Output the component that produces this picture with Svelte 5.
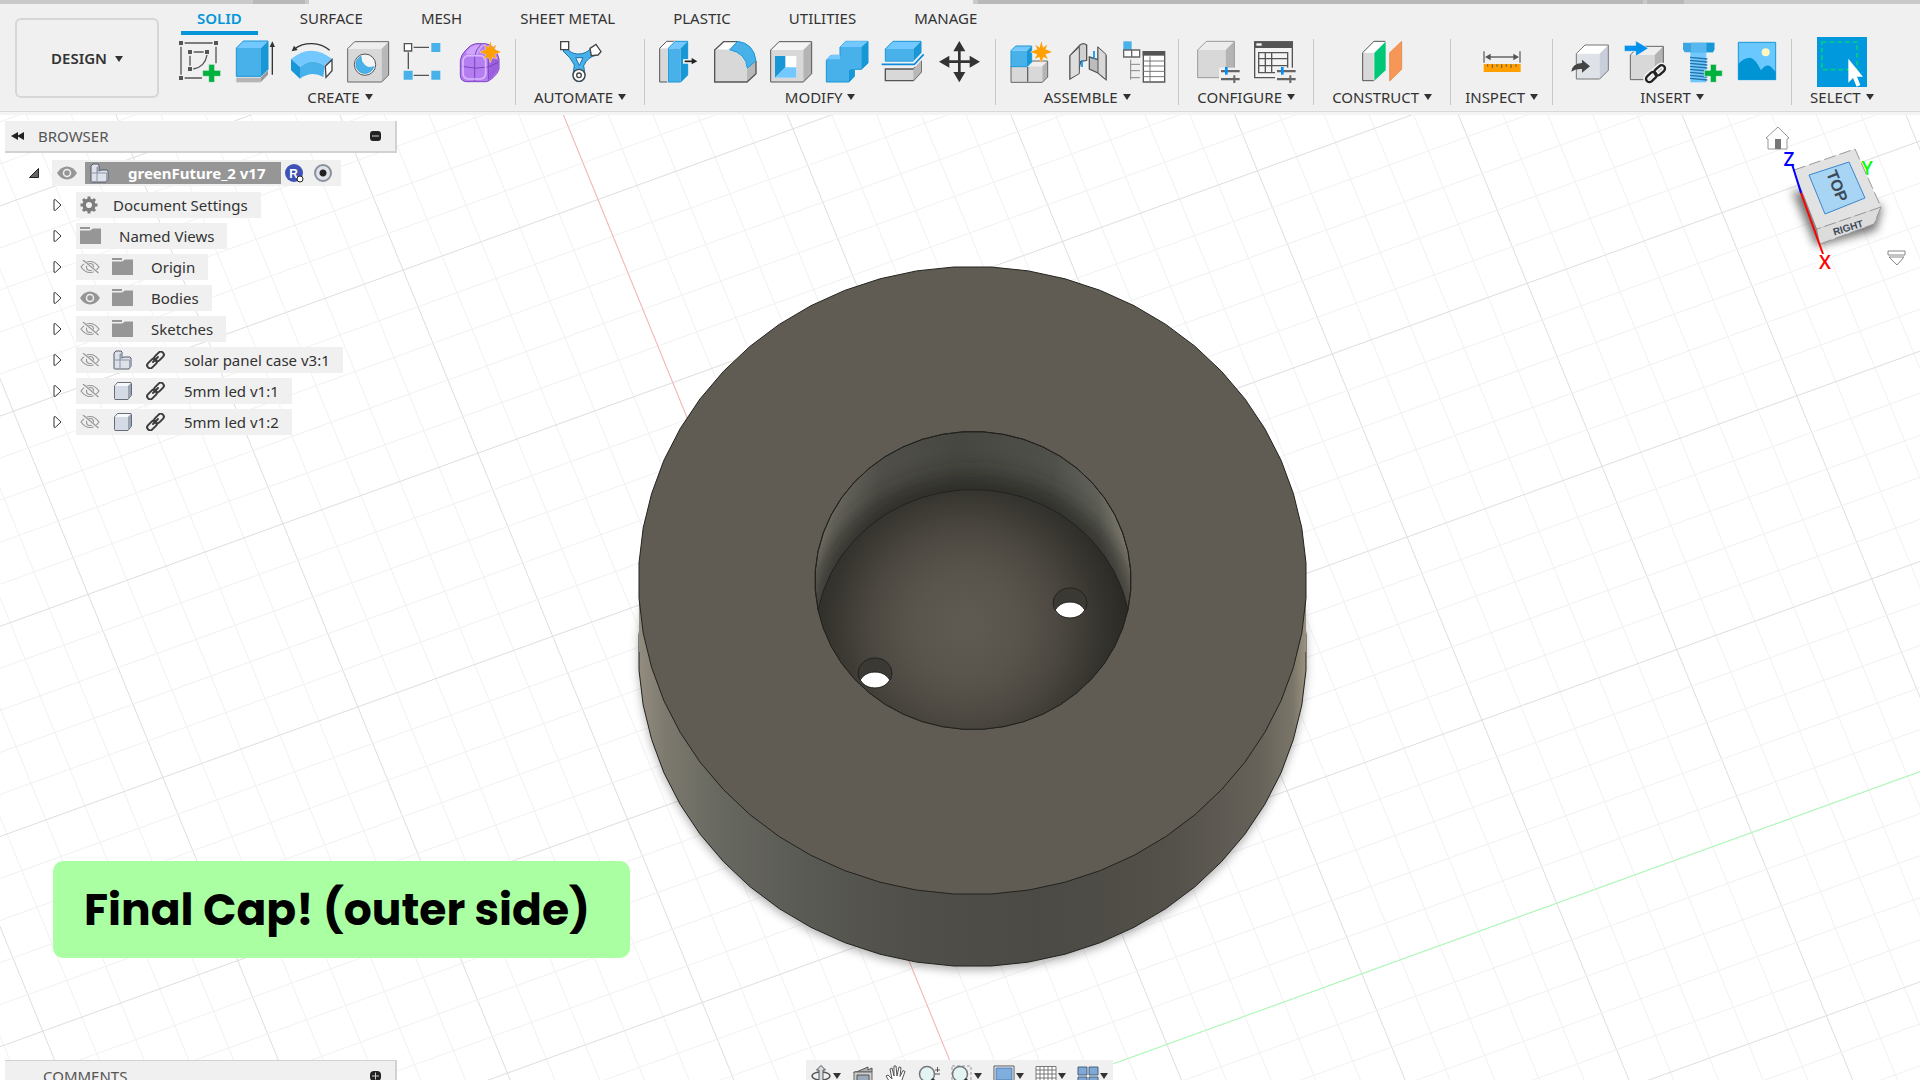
<script>
  // CAD workspace: ribbon toolbar, browser tree and the modelling canvas.
  // Toolbar icons are drawn in a 126-unit box and shown at 42px.

  const tabs = ['SOLID', 'SURFACE', 'MESH', 'SHEET METAL', 'PLASTIC', 'UTILITIES', 'MANAGE'];
  let activeTab = $state('SOLID');

  const groups = [
    { label: 'CREATE', icons: ['sketch', 'extrude', 'revolve', 'hole', 'pattern', 'form'] },
    { label: 'AUTOMATE', icons: ['automate'], narrow: true },
    { label: 'MODIFY', icons: ['presspull', 'fillet', 'shell', 'combine', 'split', 'move'] },
    { label: 'ASSEMBLE', icons: ['component', 'joint', 'bom'] },
    { label: 'CONFIGURE', icons: ['configure', 'configtable'], narrow: true },
    { label: 'CONSTRUCT', icons: ['plane'], narrow: true },
    { label: 'INSPECT', icons: ['measure'] },
    { label: 'INSERT', icons: ['derive', 'insertlink', 'fastener', 'decal'] },
    { label: 'SELECT', icons: ['select'], narrow: true },
  ];

  const tree = [
    { label: 'Document Settings', icon: 'gear' },
    { label: 'Named Views', icon: 'folder' },
    { label: 'Origin', eye: 'off', icon: 'folder' },
    { label: 'Bodies', eye: 'on', icon: 'folder' },
    { label: 'Sketches', eye: 'off', icon: 'folder' },
    { label: 'solar panel case v3:1', eye: 'off', icon: 'assembly', link: true },
    { label: '5mm led v1:1', eye: 'off', icon: 'body', link: true },
    { label: '5mm led v1:2', eye: 'off', icon: 'body', link: true },
  ];

  const nav = [
    { name: 'orbit', menu: true },
    { name: 'lookat' },
    { name: 'pan' },
    { name: 'zoom' },
    { name: 'fit', menu: true },
    { name: 'display', menu: true },
    { name: 'grid', menu: true },
    { name: 'viewports', menu: true },
  ];

  // Ground grid: an origin and the two axis steps of one major cell.
  const origin = { x: 972, y: 1115 };
  const u = { x: 74.8, y: 183.1 };
  const v = { x: 194.9, y: -70.6 };

  function gridLine(i, step, dir) {
    const k = i / 5;
    const cx = origin.x + step.x * k;
    const cy = origin.y + step.y * k;
    return {
      x1: cx - dir.x * 14,
      y1: cy - dir.y * 14,
      x2: cx + dir.x * 14,
      y2: cy + dir.y * 14,
      major: i % 5 === 0,
    };
  }

  const range = Array.from({ length: 121 }, (_, i) => i - 60);
  const xLines = range.map((i) => gridLine(i, v, u));
  const yLines = range.map((i) => gridLine(i, u, v));

  // Faceted ellipse, the way the renderer tessellates round edges.
  function ring(cx, cy, rx, ry, n = 56) {
    return Array.from({ length: n }, (_, i) => {
      const a = ((i + 0.5) / n) * Math.PI * 2 - Math.PI / 2;
      return `${(cx + rx * Math.cos(a)).toFixed(1)},${(cy + ry * Math.sin(a)).toFixed(1)}`;
    }).join(' ');
  }

  const topFace = ring(972.5, 580.5, 334, 314);
  const baseFace = ring(972.5, 652.5, 334, 314);
  const bore = ring(973, 580.5, 158, 149, 48);
  const floor = ring(973, 638.5, 158, 149, 48);
  const holes = [
    { x: 1070, y: 603 },
    { x: 875, y: 673 },
  ];
</script>

{#snippet box(x, y, w, h, d, front, top, side, line)}
  <g stroke={line} stroke-width="3" stroke-linejoin="round">
    <path d="M{x} {y + d}h{w - d}v{h - d}h{d - w}z" fill={front} stroke="none" />
    <path d="M{x} {y + d}l{d} {-d}h{w - d}l{-d} {d}z" fill={top} stroke="none" />
    <path d="M{x + w - d} {y + d}l{d} {-d}v{h - d}l{-d} {d}z" fill={side} stroke="none" />
    <path d="M{x} {y + d}l{d} {-d}h{w - d}v{h - d}l{-d} {d}h{d - w}z" fill="none" />
  </g>
{/snippet}

{#snippet plus(x, y)}
  <path
    d="M{x - 9} {y - 27}h18v18h18v18h-18v18h-18v-18h-18v-18h18z"
    fill="#00b140"
    stroke="#f0f0f0"
    stroke-width="2"
  />
{/snippet}

{#snippet star(x, y)}
  <path
    transform="translate({x} {y})"
    d="M0-32L5-13 18-22 12-8 32 0 12 7 20 21 6 14 0 32-6 14-20 21-12 7-32 0-12-8-18-22-5-13z"
    fill="#ff9f00"
    stroke="#f0f0f0"
    stroke-width="2"
    paint-order="stroke"
  />
{/snippet}

{#snippet sliders(x, y)}
  <g fill="#666">
    <path d="M{x - 6} {y - 2}h66v43h-66z" fill="#f0f0f0" />
    <path d="M{x} {y + 5}h56v7h-56zM{x} {y + 29}h56v7h-56zM{x + 37} {y + 21}h6v23h-6z" />
    <path d="M{x + 12} {y - 4}h8v23h-8z" fill="#0091ff" />
  </g>
{/snippet}

{#snippet chain()}
  <g fill="none" stroke="#3c3c3c" stroke-width="2" stroke-linecap="round">
    <rect x="7.5" y="2.5" width="11" height="6" rx="3" transform="rotate(-45 13 5.5)" />
    <rect x="0.5" y="9.5" width="11" height="6" rx="3" transform="rotate(-45 6 12.5)" />
    <path d="M7 11l5-5" />
  </g>
{/snippet}

{#snippet toolIcon(name)}
  <svg class="tool-icon" viewBox="0 0 126 126" aria-hidden="true">
    {#if name === 'sketch'}
      <g fill="#555">
        <path d="M0 0h12v12H0zM105 0h12v12h-12zM0 105h12v12H0zM27 27h12v12H27zM78 27h12v12H78zM27 78h12v12H27z" />
      </g>
      <path d="M17 6h84M6 17v84M111 17v50M17 111h52M44 33h30M33 44v30M84 42C80 65 66 80 43 84" fill="none" stroke="#555" stroke-width="4" />
      {@render plus(98, 97)}
    {:else if name === 'extrude'}
      <path d="M4 110h73v14H4z" fill="#b5b5b5" />
      <path d="M77 110l22-22v13l-22 23z" fill="#999" />
      {@render box(4, 0, 95, 106, 21, '#49b1ea', '#73c9ff', '#1897d6', '#1897d6')}
      <path d="M112 101V14" stroke="#333" stroke-width="4" />
      <path d="M112 1l8 17h-16z" fill="#333" />
    {:else if name === 'revolve'}
      <path d="M116 28C86 2 40 2 10 24" fill="none" stroke="#333" stroke-width="4" />
      <path d="M2 31l7-17 11 13z" fill="#333" />
      <path d="M0 54Q60 4 124 54L101 74Q62 48 27 78z" fill="#73c9ff" />
      <path d="M0 54L27 78v35L0 88z" fill="#1897d6" />
      <path d="M27 78Q62 48 101 74L97 108Q62 88 27 113z" fill="#49b1ea" />
      <path d="M103 76l20-20v33l-18 20z" fill="#fff" stroke="#444" stroke-width="4" />
    {:else if name === 'hole'}
      {@render box(2, 2, 123, 121, 21, '#d8d8d8', '#eee', '#b8b8b8', '#666')}
      <circle cx="54" cy="71" r="32" fill="#f4f4f4" stroke="#555" stroke-width="3" />
      <path d="M42 46A27 27 0 1 0 80 77Q66 84 54 74 40 62 42 46z" fill="#49b1ea" stroke="#1897d6" stroke-width="2" />
    {:else if name === 'pattern'}
      <path d="M32 19h46M16 34v50M32 103h46" stroke="#555" stroke-width="4" />
      <path d="M4 8h22v22H4z" fill="#fff" stroke="#555" stroke-width="4" />
      <path d="M85 6h27v27H85zM2 89h27v27H2zM85 89h27v27H85z" fill="#49b1ea" />
    {:else if name === 'form'}
      <path d="M4 58Q6 42 20 28 34 10 50 8h30q30 4 40 46v30q-4 14-18 26t-20 12H24Q4 122 4 102z" fill="#b57ef0" stroke="#8143c4" stroke-width="3" />
      <path d="M20 36Q36 12 52 11h24Q62 24 56 40H24z" fill="#cfa4ff" />
      <path d="M92 56l26-4v30q-6 16-28 34z" fill="#9a5fdd" />
      <path d="M8 76q40 10 80 2l30-14M47 120V46Q50 26 66 10M88 116V46" fill="none" stroke="#7c42c0" stroke-width="3" />
      <rect x="12" y="44" width="68" height="70" rx="16" fill="none" stroke="#dab8ff" stroke-width="5" />
      {@render star(94, 33)}
    {:else if name === 'automate'}
      <path d="M22 20Q34 38 56 39 80 40 96 22l16 20Q86 48 74 74l4 28q0 20-18 20t-18-20l4-30Q36 50 12 30z" fill="#49b1ea" stroke="#1573b2" stroke-width="3" />
      <path d="M50 50h22l-11 24z" fill="#f0f0f0" stroke="#1573b2" stroke-width="3" />
      <path d="M5 2h24v24H5z" fill="#fff" stroke="#444" stroke-width="4" />
      <path d="M93 22l18-12 15 22-9 10-20 2z" fill="#fff" stroke="#444" stroke-width="4" />
      <circle cx="60" cy="103" r="18" fill="#fff" stroke="#444" stroke-width="4" />
      <circle cx="60" cy="103" r="7" fill="none" stroke="#444" stroke-width="4" />
    {:else if name === 'presspull'}
      {@render box(2, 1, 50, 122, 21, '#d8d8d8', '#fff', '#b8b8b8', '#555')}
      <path d="M24 24L46 0h6v125H24z" fill="#f0f0f0" />
      {@render box(28, 1, 58, 122, 21, '#49b1ea', '#73c9ff', '#1897d6', '#1897d6')}
      <path d="M72 54h28V43l18 18-18 18V68H72z" fill="#f0f0f0" />
      <path d="M77 61h22" stroke="#222" stroke-width="5" />
      <path d="M98 51l17 10-17 9z" fill="#222" />
    {:else if name === 'fillet'}
      <path d="M0 25L26 2h40L42 26q44 8 54 60l27-28v41L96 123H0z" fill="#d8d8d8" />
      <path d="M0 25L26 2h40L42 26z" fill="#fff" />
      <path d="M96 86l27-28v41L96 123z" fill="#b8b8b8" />
      <path d="M66 2H26L-1 27v96h97l27-25V60" fill="none" stroke="#555" stroke-width="4" />
      <path d="M44 26L68 1q48 6 55 58L97 82Q92 36 44 26z" fill="#49b1ea" stroke="#1897d6" stroke-width="3" />
    {:else if name === 'shell'}
      {@render box(-1, 2, 123, 121, 25, '#d8d8d8', '#f4f4f4', '#b4b4b4', '#555')}
      <path d="M12 45h64v65H12z" fill="#fff" />
      <path d="M12 45h31v34l-31 31z" fill="#1897d6" />
      <path d="M12 110l31-31h33v31z" fill="#73c9ff" />
    {:else if name === 'combine'}
      <path d="M-2 58l14-15h27V18L56 1h67v65l-20 19H82v21l-16 17H-2z" fill="#49b1ea" stroke="#1897d6" stroke-width="3" />
      <path d="M-2 55l14-13h27v13zM39 18L56 1h67l-19 17z" fill="#73c9ff" />
      <path d="M104 18l19-17v65l-19 19zM66 123l16-17V85H70l-4 5z" fill="#1897d6" />
    {:else if name === 'split'}
      {@render box(7, 1, 107, 60, 23, '#49b1ea', '#73c9ff', '#1897d6', '#1897d6')}
      <path d="M7 84h84l24-24v32L91 119H7z" fill="#d8d8d8" stroke="#555" stroke-width="4" />
      <path d="M91 84l24-24v32L91 119z" fill="#b8b8b8" />
      <path d="M-4 70h98l28-30" fill="none" stroke="#f0f0f0" stroke-width="16" />
      <path d="M-4 70h98l28-30" fill="none" stroke="#0c8ce0" stroke-width="5" />
    {:else if name === 'move'}
      <path d="M61 0l18 31H65v27h27V44l31 18-31 18V66H65v27h14l-18 31-18-31h14V66H31v14L0 62l31-18v14h26V31H43z" fill="#333" />
    {:else if name === 'component'}
      {@render box(3, 60, 110, 64, 16, '#d8d8d8', '#eee', '#b4b4b4', '#666')}
      {@render box(3, 15, 62, 62, 14, '#49b1ea', '#73c9ff', '#1897d6', '#1897d6')}
      <path d="M53 78v44" stroke="#666" stroke-width="4" />
      {@render star(94, 33)}
    {:else if name === 'joint'}
      <path d="M12 44l30-32q10-8 20 0v46l-18 4-8 34-24 18z" fill="#d0d0d0" stroke="#555" stroke-width="4" />
      <path d="M12 44l28-26v80l-28 16z" fill="#dedede" stroke="#555" stroke-width="3" />
      <path d="M120 44L96 20v36l-26-8v36l26 12 24 20z" fill="#bcbcbc" stroke="#555" stroke-width="4" />
      <path d="M96 18l24 22v76L96 96z" fill="#d8d8d8" stroke="#555" stroke-width="3" />
      <path d="M48 58v20M84 30v24" stroke="#0091ff" stroke-width="5" />
    {:else if name === 'bom'}
      <path d="M4 1h25v26H4z" fill="#49b1ea" />
      <path d="M5 27h24v21H5zM29 27h24v21H29z" fill="#fff" stroke="#666" stroke-width="4" />
      <path d="M26 56v60M26 70h28M26 89h28M26 110h28" stroke="#888" stroke-width="3" />
      <path d="M64 32h64v91H64z" fill="#fff" stroke="#555" stroke-width="4" />
      <path d="M62 30h66v14H62z" fill="#555" />
      <path d="M64 60h64M64 75h64M64 91h64M64 107h64M84 46v76" stroke="#777" stroke-width="3" />
    {:else if name === 'configure'}
      {@render box(2, 1, 110, 109, 26, '#d8d8d8', '#ececec', '#b4b4b4', '#999')}
      {@render sliders(72, 82)}
    {:else if name === 'configtable'}
      <path d="M5 3h113v107H5z" fill="#f4f4f4" stroke="#555" stroke-width="4" />
      <path d="M3 1h117v20H3z" fill="#555" />
      <path d="M10 7h16v7H10z" fill="#fff" />
      <path d="M17 35h87v60H17zM17 53h87M17 74h87M37 35v60M56 35v60" fill="none" stroke="#555" stroke-width="4" />
      {@render sliders(72, 82)}
    {:else if name === 'plane'}
      {@render box(5, 1, 68, 118, 34, '#d8d8d8', '#fff', '#d8d8d8', '#555')}
      <path d="M39 36L75 0v88l-36 33z" fill="#00c878" stroke="#f0f0f0" stroke-width="2" />
      <path d="M86 35l36-34v84L86 120z" fill="#f79757" stroke="#e07a35" stroke-width="2" />
    {:else if name === 'measure'}
      <path d="M8 69h111v24H8z" fill="#ff9f00" />
      <path d="M20 70v7M34 70v11M48 70v7M62 70v11M76 70v7M90 70v11M105 70v7" stroke="#555" stroke-width="3" />
      <path d="M9 31v34M117 31v34M20 48h86" stroke="#666" stroke-width="4" />
      <path d="M12 48l17-10v20zM114 48L97 38v20z" fill="#555" />
    {:else if name === 'derive'}
      {@render box(28, 12, 96, 102, 26, '#dfe2e8', '#fff', '#c9cedb', '#777')}
      <path d="M13 92q2-24 32-26V56l24 20-24 19V84q-20-2-32 8z" fill="#444" />
    {:else if name === 'insertlink'}
      {@render box(22, 16, 99, 100, 26, '#d8d8d8', '#eee', '#b4b4b4', '#666')}
      <path d="M4 13h34V-1l38 23-38 24V31H4z" fill="#0091ee" stroke="#f0f0f0" stroke-width="2" />
      <g fill="none" stroke="#f0f0f0" stroke-width="17">
        <rect x="92" y="78" width="36" height="20" rx="10" transform="rotate(-42 110 88)" />
        <rect x="67" y="98" width="36" height="20" rx="10" transform="rotate(-42 85 108)" />
      </g>
      <g fill="none" stroke="#222" stroke-width="7">
        <rect x="92" y="78" width="36" height="20" rx="10" transform="rotate(-42 110 88)" />
        <rect x="67" y="98" width="36" height="20" rx="10" transform="rotate(-42 85 108)" />
      </g>
    {:else if name === 'fastener'}
      <path d="M34 30h48v94H34z" fill="#73c9ff" />
      <path d="M12 5h94v20l-4 9H17l-5-9z" fill="#3ba6df" />
      <path d="M36 5h47v29H36z" fill="#58b7ee" />
      <path d="M83 5h23v20l-4 9H83z" fill="#1897d6" />
      <path d="M33 49l52 5M33 58l52 5M33 67l52 5M33 76l52 5M33 85l52 5M33 94l52 5M33 103l52 5M33 112l52 5" stroke="#2273a8" stroke-width="4" />
      {@render plus(103, 97)}
    {:else if name === 'decal'}
      <path d="M10 4h112v112H10z" fill="#6bc8ff" stroke="#1897d6" stroke-width="3" />
      <path d="M10 70Q24 50 46 50q16 4 32 38 14-20 28-12l16 16v24H10z" fill="#0094d4" />
      <circle cx="92" cy="34" r="12" fill="#fff8c0" />
    {:else if name === 'select'}
      <path d="M-12-12h150v150H-12z" fill="#0099dd" />
      <path d="M3 3h105v83H3z" fill="none" stroke="#00d084" stroke-width="5" stroke-dasharray="14 9" />
      <path d="M82 55v72l14-14 11 26 11-5-10-25h18z" fill="#fff" transform="translate(0 -2)" />
    {/if}
  </svg>
{/snippet}

{#snippet eye(kind)}
  <svg class="eye" viewBox="0 0 20 14" aria-hidden="true">
    {#if kind === 'on'}
      <path d="M0 7Q4 0.5 10 0.5T20 7Q16 13.5 10 13.5T0 7z" fill="#969696" />
      <circle cx="10" cy="7" r="3.5" fill="none" stroke="#f0f0f0" stroke-width="1.5" />
    {:else}
      <g fill="none" stroke="#969696" stroke-width="1.2">
        <path d="M1 7Q5 1.5 10 1.5T19 7Q15 12.5 10 12.5T1 7z" />
        <circle cx="10" cy="7" r="3.5" />
        <path d="M2 0l17 14" stroke="#f0f0f0" stroke-width="3" />
        <path d="M3 0l15.5 13" />
      </g>
    {/if}
  </svg>
{/snippet}

{#snippet treeIcon(name)}
  {#if name === 'gear'}
    <svg class="gear" viewBox="-9 -9 18 18" aria-hidden="true">
      <circle r="4.8" fill="none" stroke="#7d7d7d" stroke-width="3.5" />
      {#each [0, 45, 90, 135] as a}
        <path d="M-1.5-8.5h3v3h-3zM-1.5 5.5h3v3h-3z" fill="#7d7d7d" transform="rotate({a})" />
      {/each}
    </svg>
  {:else if name === 'folder'}
    <svg class="node" viewBox="0 0 22 20" aria-hidden="true">
      <path d="M0 1h10v2H0zM0 4.5h10l3-2h8V18H0z" fill="#969696" />
    </svg>
  {:else if name === 'assembly'}
    <svg class="node" viewBox="0 0 22 20" aria-hidden="true">
      <path d="M2 3l2-2h5l1 1v6l2-1h6l1 1v8l-2 3H2.500L2 18.5z" fill="#dde2ea" stroke="#555b66" />
      <path d="M8 4l2-2v6l-2 2zM17 10l2-2v8l-2 3z" fill="#9aa3b2" />
      <path d="M2 10h6v8M8 10h9M8 4v6" fill="none" stroke="#8d95a3" />
    </svg>
  {:else}
    <svg class="node" viewBox="0 0 22 20" aria-hidden="true">
      <path d="M2.500 5l3-3.500H19l.5 1V14L16 18.500H3l-.5-1z" fill="#d5dbe5" stroke="#666c78" />
      <path d="M3 5l3-3h13l-3 3z" fill="#f6f8fb" />
      <path d="M16 5l3-3v12l-3 4z" fill="#9aa3b2" />
    </svg>
  {/if}
{/snippet}

{#snippet navIcon(name)}
  <svg class="nav-icon" viewBox="0 0 22 22" aria-hidden="true">
    {#if name === 'orbit'}
      <ellipse cx="11" cy="11" rx="9" ry="4" fill="none" stroke="#555" stroke-width="1.5" />
      <path d="M9 20V5H6.500L11 .5 15.500 5H13v15z" fill="#d5dde3" stroke="#555" />
    {:else if name === 'lookat'}
      <path d="M2 8l14-6v3l4-2v4H2z" fill="#b0b0b0" stroke="#555" />
      <path d="M2 7h18v13H2z" fill="#ccc" stroke="#666" />
      <path d="M5 10h12v8H5z" fill="#9aaabb" stroke="#555" />
    {:else if name === 'pan'}
      <path d="M6 19L1 11l2-1 4 4L5 4l2-1 2 8V1h2l1 10 2-9 2 .5-1 9 3-6 2 1-4 11-2 5z" fill="#fff" stroke="#555" />
    {:else if name === 'zoom'}
      <circle cx="9" cy="9" r="7.5" fill="#e3f4f4" stroke="#777" stroke-width="1.5" />
      <path d="M14 14l6 6" stroke="#333" stroke-width="3" />
      <path d="M17 5h5M19.500 2v5M17 9h5" stroke="#555" />
    {:else if name === 'fit'}
      <path d="M1 1h19v18H1z" fill="none" stroke="#999" stroke-dasharray="3 2" />
      <circle cx="9" cy="9" r="7.5" fill="#e3f4f4" stroke="#777" stroke-width="1.5" />
      <path d="M14 14l6 6" stroke="#333" stroke-width="3" />
    {:else if name === 'display'}
      <path d="M1 1h20v16H1z" fill="#fff" stroke="#555" />
      <path d="M3 3h16v12H3z" fill="#7fadde" stroke="#4a7db5" />
    {:else if name === 'grid'}
      <path d="M1 1.500h20v18H1zM1 5h20M1 9h20M1 13h20M5 1v18M9 1v18M13 1v18M17 1v18" fill="#fff" stroke="#777" />
    {:else}
      <path d="M1 2h9v8H1zM12 2h9v8h-9zM1 12h9v8H1zM12 12h9v8h-9z" fill="#7fa8d4" stroke="#44617f" />
    {/if}
  </svg>
{/snippet}

<div class="app">
  <div class="window-tabs">
    <span style="width: 13.2%"></span>
    <span class="dark" style="width: 2.7%"></span>
    <span style="width: 0.2%"></span>
    <span class="open" style="width: 34.6%"></span>
    <span style="width: 0.25%"></span>
    <span class="dark" style="width: 34.6%"></span>
    <span style="width: 0.25%"></span>
    <span class="dark" style="width: 1.9%"></span>
    <span class="rest"></span>
  </div>

  <header>
    <button class="workspace-switch" type="button">DESIGN <i class="caret"></i></button>
    <div class="ribbon">
      <nav class="tabs">
        {#each tabs as tab}
          <button type="button" class="tab" class:active={tab === activeTab} onclick={() => (activeTab = tab)}>{tab}</button>
        {/each}
      </nav>
      <div class="groups">
        {#each groups as group}
          <section class="group" class:narrow={group.narrow}>
            <div class="tools">
              {#each group.icons as name}
                <button type="button" class="tool" aria-label={name}>{@render toolIcon(name)}</button>
              {/each}
            </div>
            <button type="button" class="group-label">{group.label}<i class="caret"></i></button>
          </section>
        {/each}
      </div>
    </div>
  </header>

  <main>
    <svg class="scene" viewBox="0 115 1920 965" preserveAspectRatio="xMidYMid slice" aria-hidden="true">
      <defs>
        <linearGradient id="side">
          <stop offset="0" stop-color="#938d7f" />
          <stop offset="0.04" stop-color="#7d796e" />
          <stop offset="0.12" stop-color="#676860" />
          <stop offset="0.25" stop-color="#5a5a54" />
          <stop offset="0.4" stop-color="#504f4a" />
          <stop offset="0.6" stop-color="#4b4a44" />
          <stop offset="0.8" stop-color="#54504a" />
          <stop offset="0.93" stop-color="#66625a" />
          <stop offset="0.98" stop-color="#7a7568" />
          <stop offset="1" stop-color="#9a9280" />
        </linearGradient>
        <linearGradient id="wall">
          <stop offset="0" stop-color="#7f7b70" />
          <stop offset="0.06" stop-color="#68665e" />
          <stop offset="0.2" stop-color="#504f49" />
          <stop offset="0.45" stop-color="#474741" />
          <stop offset="0.75" stop-color="#4f504a" />
          <stop offset="0.9" stop-color="#62625b" />
          <stop offset="1" stop-color="#8d887b" />
        </linearGradient>
        <radialGradient id="floorShade" gradientUnits="userSpaceOnUse" cx="965" cy="626" r="168">
          <stop offset="0" stop-color="#5f5a52" />
          <stop offset="0.3" stop-color="#5a554c" />
          <stop offset="0.55" stop-color="#4d4942" />
          <stop offset="0.8" stop-color="#37352f" />
          <stop offset="1" stop-color="#282722" />
        </radialGradient>
        <filter id="soft"><feGaussianBlur stdDeviation="5" /></filter>
        <filter id="softer" x="-20%" y="-20%" width="140%" height="140%"><feGaussianBlur stdDeviation="11" /></filter>
        <clipPath id="boreClip"><polygon points={bore} /></clipPath>
        {#each holes as h, i}
          <clipPath id="hole{i}"><ellipse cx={h.x} cy={h.y} rx="17" ry="15" /></clipPath>
        {/each}
      </defs>

      {#each [...xLines, ...yLines] as l}
        <line x1={l.x1} y1={l.y1} x2={l.x2} y2={l.y2} class="grid" class:major={l.major} />
      {/each}
      {#each [xLines[60], yLines[60]] as l, i}
        <line x1={l.x1} y1={l.y1} x2={l.x2} y2={l.y2} class={i ? 'axis-y' : 'axis-x'} />
      {/each}

      <!-- cap body -->
      <polygon points={baseFace} fill="#00000050" filter="url(#soft)" transform="translate(0 4)" />
      <g class="edge">
        <polygon points={baseFace} fill="url(#side)" />
        <path d="M639 580h667v72H639z" fill="url(#side)" stroke="none" />
        <polygon points={topFace} fill="#615c53" />
        <polygon points={bore} fill="url(#wall)" />
      </g>
      <g clip-path="url(#boreClip)">
        <polygon points={floor} fill="none" stroke="#22211e" stroke-width="30" opacity="0.7" filter="url(#softer)" />
        <polygon points={floor} fill="url(#floorShade)" class="edge" />
      </g>
      {#each holes as h, i}
        <g clip-path="url(#hole{i})">
          <path d="M{h.x - 18} {h.y - 16}h36v34h-36z" fill="#3b3934" />
          <ellipse cx={h.x} cy={h.y + 14} rx="17" ry="15" fill="#fff" class="edge" />
        </g>
        <ellipse cx={h.x} cy={h.y} rx="17" ry="15" class="edge" fill="none" />
      {/each}
      <polygon points={bore} fill="none" class="edge" />

      <!-- view cube -->
      <polygon points="1792,190 1816,246 1876,230 1882,206" fill="#00000090" filter="url(#soft)" />
      <text x="1867" y="175" class="axis-name" fill="#00ff00">Y</text>
      <path d="M1794 170l23 59 3 15-20-51z" fill="#888" />
      <path d="M1817 229l64-22-7 17-54 20z" fill="#dcdcdc" />
      <path d="M1794 170l61-21 26 58-64 22z" fill="#e2e2e2" />
      <path d="M1794 170l61-21 26 58-64 22M1881 207l-7 17-54 20" fill="none" stroke="#999" stroke-dasharray="12 4" />
      <path d="M1809 175l40-13 16 36-40 16z" fill="#a9d5f5" stroke="#3a86cc" />
      <text class="face" transform="translate(1832 188) rotate(68)">TOP</text>
      <text class="face small" transform="translate(1849 231) rotate(-17)">RIGHT</text>
      <path d="M1792 164l9 29" stroke="#0000ff" stroke-width="2" />
      <path d="M1801 193l22 61" stroke="#ff0000" stroke-width="2" />
      <text x="1789" y="166" class="axis-name" fill="#0000ff">Z</text>
      <text x="1825" y="269" class="axis-name" fill="#ff0000">X</text>
      <path d="M1778 127l-12 11 2 1v10h19v-10l2-1z" fill="#fff" stroke="#999" />
      <path d="M1775 139h6v10h-6z" fill="#777" />
      <path d="M1888 251h17v4h-17zM1889 257h15l-7 8z" fill="#fff" stroke="#888" />
    </svg>

    <aside class="browser">
      <div class="panel-head">
        <button type="button" class="plain" aria-label="Collapse browser">
          <svg width="14" height="10" viewBox="0 0 14 10"><path d="M7 1v8L0 5zM13 1v8L6 5z" fill="#222" /></svg>
        </button>
        <span>BROWSER</span>
        <button type="button" class="plain end" aria-label="Minimise">
          <svg width="11" height="12" viewBox="0 0 11 12"><rect y="1" width="11" height="10" rx="3" fill="#222" /><path d="M2 6h7" stroke="#ccc" /></svg>
        </button>
      </div>

      <ul class="tree">
        <li class="root">
          <button type="button" class="plain twisty" aria-label="Collapse">
            <svg width="10" height="10" viewBox="0 0 10 10"><path d="M9.500 .5v9H.5z" fill="#666" stroke="#222" /></svg>
          </button>
          <div class="chip">
            {@render eye('on')}
            <div class="selected">{@render treeIcon('assembly')}<strong>greenFuture_2 v17</strong></div>
            <svg class="badge" viewBox="0 0 20 20" aria-hidden="true">
              <circle cx="9" cy="10" r="9" fill="#3f51b5" />
              <text x="8.5" y="14.5">R</text>
              <circle cx="15" cy="16" r="3" fill="#fff" stroke="#222" />
            </svg>
            <input type="radio" checked aria-label="Activate component" />
          </div>
        </li>
        {#each tree as row}
          <li>
            <button type="button" class="plain twisty" aria-label="Expand {row.label}">
              <svg width="9" height="12" viewBox="0 0 9 12"><path d="M1 .8h1.500L8 6l-5.500 5.200H1z" fill="#fff" stroke="#333" /></svg>
            </button>
            <div class="chip">
              {#if row.eye}{@render eye(row.eye)}{/if}
              {@render treeIcon(row.icon)}
              {#if row.link}<svg class="link" viewBox="0 0 19 18" aria-hidden="true">{@render chain()}</svg>{/if}
              <span>{row.label}</span>
            </div>
          </li>
        {/each}
      </ul>
    </aside>

    <div class="callout">Final Cap! (outer side)</div>

    <div class="panel-head comments">
      <span>COMMENTS</span>
      <button type="button" class="plain end" aria-label="Expand comments">
        <svg width="11" height="12" viewBox="0 0 11 12"><rect y="1" width="11" height="10" rx="4" fill="#222" /><path d="M2 6h7M5.500 2.500v7" stroke="#ccc" /></svg>
      </button>
    </div>

    <div class="navbar">
      {#each nav as item}
        <button type="button" class="plain" class:menu={item.menu} aria-label={item.name}>
          {@render navIcon(item.name)}
          {#if item.menu}<i class="caret"></i>{/if}
        </button>
      {/each}
    </div>
  </main>
</div>

<style>
  :global(body) { margin: 0; }
  .app {
    display: flex;
    flex-direction: column;
    height: 100vh;
    overflow: hidden;
    background: #fff;
    color: #333;
    font: 15px/20px "Noto Sans", "Open Sans", sans-serif;
  }
  button {
    padding: 0;
    border: 0;
    background: none;
    color: inherit;
    font: inherit;
    cursor: pointer;
  }
  .caret {
    display: inline-block;
    border: 4px solid transparent;
    border-top: 6px solid #333;
    border-bottom: 0;
  }

  /* strip of document tabs peeking in above the ribbon */
  .window-tabs {
    display: flex;
    flex: none;
    height: 4px;
    background: #c9c9c9;
  }
  .window-tabs .dark { background: #b8b8b8; }
  .window-tabs .open { background: #f0f0f0; }
  .window-tabs .rest { flex: 1; }

  header {
    display: flex;
    flex: none;
    height: 107px;
    background: #f0f0f0;
    border-bottom: 1px solid #d9d9d9;
    box-shadow: 0 3px 0 #f4f4f4;
    position: relative;
    z-index: 1;
  }
  .workspace-switch {
    width: 144px;
    height: 80px;
    margin: 14px 6px 0 15px;
    border: 2px solid #d6d6d6;
    border-radius: 6px;
    font-weight: 600;
  }
  .workspace-switch .caret { margin: 0 0 2px 4px; }
  .ribbon { flex: 1; }
  .tabs {
    display: flex;
    gap: 26px;
    padding-left: 16px;
  }
  .tab {
    height: 31px;
    padding: 0 16px;
    border-bottom: 4px solid transparent;
    white-space: nowrap;
  }
  .tab.active {
    color: #0696d7;
    border-color: #0696d7;
    font-weight: 600;
  }
  .groups {
    display: flex;
    padding-top: 4px;
  }
  .group {
    display: flex;
    flex-direction: column;
    align-items: center;
    height: 66px;
    padding: 0 14px;
    border-right: 1px solid #c8c8c8;
  }
  .group.narrow { padding: 0 18px; }
  .group:last-child { border: 0; }
  .tools {
    display: flex;
    gap: 14px;
    padding-top: 2px;
  }
  .tool { width: 42px; height: 42px; }
  .tool-icon {
    display: block;
    width: 42px;
    height: 42px;
    overflow: visible;
  }
  .group-label {
    display: flex;
    align-items: center;
    gap: 5px;
    margin-top: 5px;
    line-height: 18px;
  }

  main {
    position: relative;
    flex: 1;
    margin-top: 3px;
    overflow: hidden;
  }
  .scene {
    position: absolute;
    inset: 0;
    width: 100%;
    height: 100%;
  }
  .grid { stroke: #f1f1f1; }
  .grid.major { stroke: #dedede; }
  .axis-x { stroke: #ffb4b4; }
  .axis-y { stroke: #a8ffb4; }
  .edge { stroke: #22221e; stroke-width: 1; }
  .axis-name {
    font: 600 19px "Open Sans", sans-serif;
    text-anchor: middle;
  }
  .face {
    font: bold 16px "Liberation Sans", sans-serif;
    fill: #3c4a58;
    text-anchor: middle;
  }
  .face.small { font-size: 10px; }

  .browser { position: relative; width: 392px; margin: 6px 0 0 5px; }
  .panel-head {
    display: flex;
    align-items: center;
    box-sizing: border-box;
    width: 392px;
    height: 32px;
    padding: 0 14px 0 6px;
    background: #f0f0f0;
    border: solid #d2d2d2;
    border-width: 0 2px 2px 0;
    color: #555;
  }
  .panel-head span { margin-left: 13px; }
  .plain { display: flex; align-items: center; }
  .end { margin-left: auto; }

  .tree {
    display: flex;
    flex-direction: column;
    gap: 5px;
    margin: 7px 0 0;
    padding: 0;
    list-style: none;
  }
  .tree li { display: flex; align-items: center; }
  .twisty { width: 23px; margin-left: 48px; }
  .root .twisty { margin-left: 24px; }
  .tree .root { margin-bottom: 1px; }
  .chip {
    display: flex;
    align-items: center;
    height: 26px;
    padding: 0 13px 0 4px;
    background: #f0f0f0;
    white-space: nowrap;
  }
  .chip svg { flex: none; }
  .root .chip { padding: 0 9px 0 5px; }
  .eye { width: 20px; height: 14px; margin-right: 12px; }
  .root .eye { margin-right: 8px; }
  .node { width: 22px; height: 20px; }
  .gear { width: 18px; height: 18px; }
  .link { width: 19px; height: 18px; margin-left: 12px; }
  .chip span { margin-left: 17px; }
  .gear + span { margin-left: 15px; }
  .link + span { margin-left: 19px; }
  .selected {
    display: flex;
    align-items: center;
    height: 22px;
    padding: 0 15px 0 4px;
    background: #969696;
    color: #fff;
  }
  .selected strong { margin-left: 17px; }
  .badge {
    width: 20px;
    height: 20px;
    margin: 0 9px 0 4px;
  }
  .badge text {
    font: bold 12px "Liberation Sans", sans-serif;
    fill: #fff;
    text-anchor: middle;
  }
  input[type='radio'] {
    appearance: none;
    width: 18px;
    height: 18px;
    margin: 0;
    border: 2px solid #8a919c;
    border-radius: 50%;
    background: radial-gradient(circle, #222 0 3px, #dfe4ec 4px);
  }

  .callout {
    position: absolute;
    left: 53px;
    bottom: 122px;
    padding: 0 40px 0 31px;
    background: #abffa3;
    border-radius: 10px;
    color: #000;
    font: 700 44px/97px Poppins, Inter, sans-serif;
  }
  .comments {
    position: absolute;
    left: 5px;
    bottom: -12px;
    border-width: 1px 2px 2px 0;
  }
  .comments span { margin-left: 32px; }

  .navbar {
    position: absolute;
    left: 42%;
    bottom: -11px;
    display: flex;
    gap: 11px;
    height: 31px;
    padding: 0 5px 0 4px;
    background: #f0f0f0;
  }
  .navbar .menu { gap: 1px; }
  .navbar .plain { color: #333; }
  .nav-icon { width: 22px; height: 22px; }
</style>
